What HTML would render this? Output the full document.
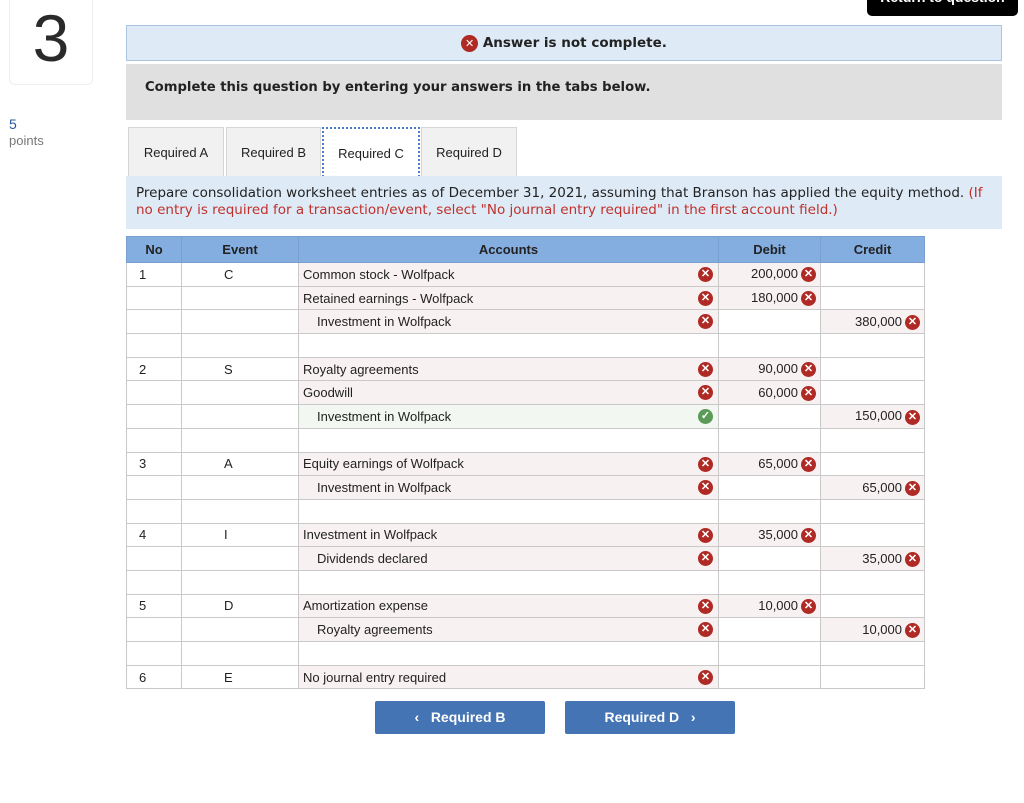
<!DOCTYPE html>
<html><head><meta charset="utf-8"><style>
*{margin:0;padding:0;box-sizing:border-box}
body{width:1024px;height:803px;background:#fff;font-family:"Liberation Sans",Arial,sans-serif;position:relative;overflow:hidden;color:#222}
.abs{position:absolute}
.qn{left:9px;top:-10px;width:84px;height:95px;border:1px solid #eee;border-top:none;border-radius:0 0 6px 6px;font-size:66px;text-align:center;line-height:96px;color:#2a2a2a;font-family:"Liberation Sans",sans-serif}
.ret{left:867px;top:-10px;width:151px;height:26px;background:#000;color:#fff;border-radius:5px;font-weight:bold;font-size:14px;text-align:center;line-height:14px}
.banner{left:126px;top:25px;width:876px;height:36px;background:#deebf7;border:1px solid #a9c4e0;text-align:center;font-weight:bold;font-size:13.5px;line-height:34px;font-family:"DejaVu Sans",sans-serif}
.gray{left:126px;top:64px;width:876px;height:56px;background:#e0e0e0;font-weight:bold;font-size:13.2px;padding:16px 0 0 19px;font-family:"DejaVu Sans",sans-serif}
.tab{top:127px;height:49px;background:#f1f1f1;border:1px solid #d6d6d6;border-bottom:none;font-size:13px;text-align:center;line-height:49px}
.info{left:126px;top:176px;width:876px;height:53px;background:#deebf7;font-size:13.5px;padding:9px 10px;line-height:17px;font-family:"DejaVu Sans",sans-serif}
.info span{color:#c0302a}
.x{display:inline-block;width:15px;height:15px;border-radius:50%;background:#b02a25;color:#fff;font-size:11px;line-height:15px;text-align:center;font-weight:bold;vertical-align:middle}
.ok{background:#5c9a57}
table{position:absolute;left:126px;top:236px;border-collapse:collapse;table-layout:fixed;font-size:13px}
th{background:#84ade0;height:26px;border:1px solid #7aa0cf;font-size:13px}
td{height:23.7px;border:1px solid #c9c9c9;padding:0 4px}
td.no{padding-left:12px}
td.c{padding-left:42px}
td.p{background:#f8f1f1}
td.g{background:#f2f7f1}
td.a{position:relative}
td.a .x{position:absolute;right:5px;top:4px}
td.n{text-align:right}
td.n .x{margin-left:3px}
.ind{padding-left:18px}
.btn{top:701px;width:170px;height:33px;background:#4474b4;color:#fff;font-weight:bold;font-size:14px;text-align:center;line-height:33px;border-radius:2px}
</style></head><body>
<div class="abs qn">3</div>
<div class="abs ret">Return to question</div>
<div class="abs" style="left:9px;top:116px;color:#2b5a9c;font-size:14px">5</div>
<div class="abs" style="left:9px;top:133px;color:#777;font-size:13px">points</div>
<div class="abs banner"><span class="x" style="width:17px;height:17px;line-height:17px">✕</span> Answer is not complete.</div>
<div class="abs gray">Complete this question by entering your answers in the tabs below.</div>
<div class="abs tab" style="left:128px;width:96px">Required A</div>
<div class="abs tab" style="left:226px;width:95px">Required B</div>
<div class="abs tab" style="left:322px;width:98px;background:#fff;border:2px dotted #4a7cc0;border-bottom:none;height:50px">Required C</div>
<div class="abs tab" style="left:421px;width:96px">Required D</div>
<div class="abs info">Prepare consolidation worksheet entries as of December 31, 2021, assuming that Branson has applied the equity method. <span>(If no entry is required for a transaction/event, select "No journal entry required" in the first account field.)</span></div>
<table>
<colgroup><col style="width:55px"><col style="width:117px"><col style="width:420px"><col style="width:102px"><col style="width:104px"></colgroup>
<tr><th>No</th><th>Event</th><th>Accounts</th><th>Debit</th><th>Credit</th></tr>
<tr><td class="no">1</td><td class="c">C</td><td class="a p">Common stock - Wolfpack<span class="x">✕</span></td><td class="n p">200,000<span class="x">✕</span></td><td></td></tr>
<tr><td></td><td></td><td class="a p">Retained earnings - Wolfpack<span class="x">✕</span></td><td class="n p">180,000<span class="x">✕</span></td><td></td></tr>
<tr><td></td><td></td><td class="a p ind">Investment in Wolfpack<span class="x">✕</span></td><td></td><td class="n p">380,000<span class="x">✕</span></td></tr>
<tr><td></td><td></td><td></td><td></td><td></td></tr>
<tr><td class="no">2</td><td class="c">S</td><td class="a p">Royalty agreements<span class="x">✕</span></td><td class="n p">90,000<span class="x">✕</span></td><td></td></tr>
<tr><td></td><td></td><td class="a p">Goodwill<span class="x">✕</span></td><td class="n p">60,000<span class="x">✕</span></td><td></td></tr>
<tr><td></td><td></td><td class="a g ind">Investment in Wolfpack<span class="x ok">✓</span></td><td></td><td class="n p">150,000<span class="x">✕</span></td></tr>
<tr><td></td><td></td><td></td><td></td><td></td></tr>
<tr><td class="no">3</td><td class="c">A</td><td class="a p">Equity earnings of Wolfpack<span class="x">✕</span></td><td class="n p">65,000<span class="x">✕</span></td><td></td></tr>
<tr><td></td><td></td><td class="a p ind">Investment in Wolfpack<span class="x">✕</span></td><td></td><td class="n p">65,000<span class="x">✕</span></td></tr>
<tr><td></td><td></td><td></td><td></td><td></td></tr>
<tr><td class="no">4</td><td class="c">I</td><td class="a p">Investment in Wolfpack<span class="x">✕</span></td><td class="n p">35,000<span class="x">✕</span></td><td></td></tr>
<tr><td></td><td></td><td class="a p ind">Dividends declared<span class="x">✕</span></td><td></td><td class="n p">35,000<span class="x">✕</span></td></tr>
<tr><td></td><td></td><td></td><td></td><td></td></tr>
<tr><td class="no">5</td><td class="c">D</td><td class="a p">Amortization expense<span class="x">✕</span></td><td class="n p">10,000<span class="x">✕</span></td><td></td></tr>
<tr><td></td><td></td><td class="a p ind">Royalty agreements<span class="x">✕</span></td><td></td><td class="n p">10,000<span class="x">✕</span></td></tr>
<tr><td></td><td></td><td></td><td></td><td></td></tr>
<tr><td class="no">6</td><td class="c">E</td><td class="a p">No journal entry required<span class="x">✕</span></td><td></td><td></td></tr>
</table>
<div class="abs btn" style="left:375px">&lsaquo;&nbsp;&nbsp;&nbsp;Required B</div>
<div class="abs btn" style="left:565px">Required D&nbsp;&nbsp;&nbsp;&rsaquo;</div>
</body></html>
